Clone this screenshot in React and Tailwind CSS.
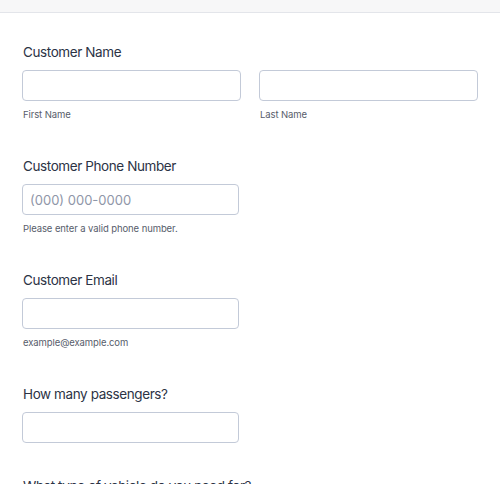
export default function App() {
  const font = { fontFamily: 'Inter, "Noto Sans", sans-serif' };
  const label = "block text-[13.5px] tracking-[-0.03em] leading-5 ml-[1px] mb-[8px]";
  const sub = "mt-[7px] ml-[1px] text-[9.5px] tracking-[-0.01em] leading-[14px] text-[#575d6b]";
  const box = "block h-[31px] border border-[#c3cad8] rounded-[4px] bg-white";
  return (
    <div className="w-[500px] h-[484px] overflow-hidden bg-white text-[#2c3345]" style={font}>
      <div className="h-[13px] bg-[#f7f7f8] border-b border-[#e3e5ea]" />
      <div className="px-[22px] pt-[29px]">
        <section className="mb-[34px]">
          <label className={label}>Customer Name</label>
          <div className="flex gap-[18px]">
            <div className="w-[219px]">
              <input className={`${box} w-full`} />
              <div className={sub}>First Name</div>
            </div>
            <div className="w-[219px]">
              <input className={`${box} w-full`} />
              <div className={sub}>Last Name</div>
            </div>
          </div>
        </section>
        <section className="mb-[34px]">
          <label className={label}>Customer Phone Number</label>
          <input
            placeholder="(000) 000-0000"
            className={`${box} w-[217px] px-[7px] text-[13px] placeholder:text-[#8f96a8]`}
          />
          <div className={sub}>Please enter a valid phone number.</div>
        </section>
        <section className="mb-[34px]">
          <label className={label}>Customer Email</label>
          <input className={`${box} w-[217px]`} />
          <div className={sub}>example@example.com</div>
        </section>
        <section className="mb-[33px]">
          <label className={label}>How many passengers?</label>
          <input className={`${box} w-[217px]`} />
        </section>
        <section>
          <label className={label}>What type of vehicle do you need for?</label>
        </section>
      </div>
    </div>
  );
}
